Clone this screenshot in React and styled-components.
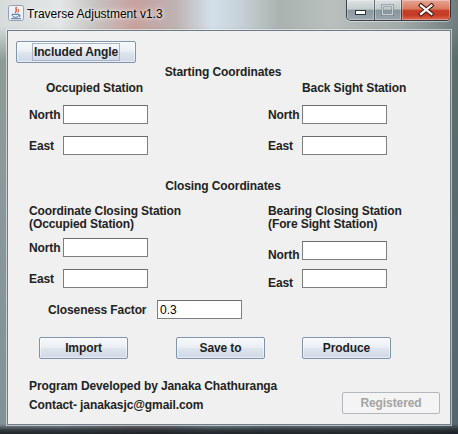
import styled, { createGlobalStyle } from "styled-components";

const Global = createGlobalStyle`
  html, body {
    margin: 0;
    padding: 0;
    background: #9aa3a6;
  }
  body {
    font-family: "Liberation Sans", Arial, sans-serif;
  }
`;

const Window = styled.div`
  width: 458px;
  height: 434px;
  display: flex;
  flex-direction: column;
  overflow: hidden;
  background:
    linear-gradient(180deg, transparent 0, transparent 424px, rgba(25, 30, 34, 0.75) 430px, rgba(20, 24, 28, 0.9) 434px),
    linear-gradient(180deg, transparent 26px, rgba(70, 92, 86, 0.5) 60px, rgba(60, 84, 96, 0.55) 100%),
    linear-gradient(90deg, #d6dbdc 0px, #e3e6e7 60px, #c7c3c1 95px, #c8a19f 135px, #bdb2b1 175px, #d3e0ea 212px, #c7d1d6 240px, #aab3b0 280px, #b9c0be 330px, #a2abaa 400px, #6f7c7d 458px);
`;

const TitleBar = styled.div`
  height: 30px;
  flex: none;
  display: flex;
  align-items: flex-start;
  padding-left: 8px;
`;

const TitleIcon = styled.svg`
  margin-top: 5px;
  flex: none;
`;

const TitleText = styled.div`
  margin: 6px 0 0 3px;
  font-size: 12px;
  line-height: 16px;
  color: #000;
  text-shadow: 0 0 6px rgba(255, 255, 255, 0.95), 0 0 3px rgba(255, 255, 255, 0.9);
`;

const Caption = styled.div`
  margin-left: auto;
  margin-right: 7px;
  height: 20px;
  display: flex;
  border: 1px solid rgba(28, 36, 44, 0.8);
  border-top: none;
  border-radius: 0 0 5px 5px;
  overflow: hidden;
  box-shadow: 0 1px 0 rgba(255, 255, 255, 0.45);
`;

const CaptionButton = styled.div`
  width: ${({ $w }) => $w}px;
  height: 20px;
  display: flex;
  align-items: center;
  justify-content: center;
  border-left: ${({ $first }) => ($first ? "none" : "1px solid rgba(28, 36, 44, 0.6)")};
  box-shadow: inset 0 0 0 1px rgba(255, 255, 255, 0.3);
  background: ${({ $close }) =>
    $close
      ? "linear-gradient(180deg, #e6a595 0%, #d9785f 45%, #c8402a 52%, #c33a25 75%, #e0694f 100%)"
      : "linear-gradient(180deg, rgba(255,255,255,0.6) 0%, rgba(214,222,229,0.55) 45%, rgba(118,133,146,0.6) 52%, rgba(146,160,170,0.65) 100%)"};
`;

const Frame = styled.div`
  flex: 1;
  display: flex;
  padding: 0 7px 9px 7px;
`;

const Panel = styled.div`
  flex: 1;
  display: flex;
  flex-direction: column;
  background: #f0f0f0;
  border: 1px solid #6f7b87;
  box-shadow: 0 0 0 1px rgba(255, 255, 255, 0.55);
  letter-spacing: -0.1px;
`;

const TopRow = styled.div`
  display: flex;
  margin-top: 10px;
  padding-left: 8px;
`;

const Button = styled.button`
  width: ${({ $w }) => $w}px;
  height: 22px;
  margin-left: ${({ $gap }) => $gap || 0}px;
  padding: 0;
  display: flex;
  align-items: center;
  justify-content: center;
  font-family: "Liberation Sans", Arial, sans-serif;
  font-size: 12px;
  font-weight: 700;
  letter-spacing: -0.1px;
  color: #1d1f24;
  border: 1px solid #8193aa;
  border-radius: 2px;
  background: linear-gradient(180deg, #f7f9fb 0%, #ebeff5 45%, #dde4ed 55%, #cfd8e4 100%);
  box-shadow: inset 0 0 0 1px rgba(255, 255, 255, 0.5);

  &:disabled {
    color: #a4a4a4;
    border-color: #b3b7ba;
    background: #f4f4f4;
    box-shadow: none;
  }
`;

const FocusRing = styled.span`
  display: inline-block;
  padding: 0 1px;
  line-height: 16px;
  border: 1px solid #a7b5c8;
`;

const SectionTitle = styled.div`
  margin-top: ${({ $top }) => $top}px;
  padding-right: 12px;
  text-align: center;
  font-size: 12px;
  font-weight: 700;
  line-height: 14px;
  color: #222;
`;

const Columns = styled.div`
  display: grid;
  grid-template-columns: 239px 1fr;
  margin-top: ${({ $top }) => $top}px;
  padding-left: 21px;
`;

const Column = styled.div`
  display: flex;
  flex-direction: column;
`;

const Heading = styled.div`
  padding-left: ${({ $indent }) => $indent || 0}px;
  font-size: 12px;
  font-weight: 700;
  line-height: ${({ $lh }) => $lh || 14}px;
  color: #222;
`;

const FieldRow = styled.div`
  display: flex;
  align-items: center;
  height: 19px;
  margin-top: ${({ $top }) => $top}px;
  padding-left: ${({ $indent }) => $indent || 0}px;
`;

const Label = styled.span`
  width: ${({ $w }) => $w || 34}px;
  flex: none;
  margin-top: ${({ $drop }) => ($drop || 0) * 2}px;
  font-size: 12px;
  font-weight: 700;
  line-height: 14px;
  color: #222;
`;

const TextField = styled.input`
  box-sizing: border-box;
  width: 85px;
  height: 19px;
  flex: none;
  margin: 0;
  padding: 0 2px;
  border: 1px solid #7c7e80;
  border-top-color: #6a6c6e;
  background: #fff;
  font-family: "Liberation Sans", Arial, sans-serif;
  font-size: 12px;
  color: #000;
  outline: none;
`;

const ButtonRow = styled.div`
  display: flex;
  margin-top: 18px;
  padding-left: 31px;
`;

const Footer = styled.div`
  display: flex;
  align-items: flex-start;
  margin-top: 20px;
  padding-left: 21px;
`;

const Credits = styled.div`
  display: flex;
  flex-direction: column;
  gap: 5px;
  font-size: 12px;
  font-weight: 700;
  line-height: 14px;
  color: #222;
`;

const FooterButton = styled(Button)`
  margin: 13px 10px 0 auto;
`;

function JavaIcon() {
  return (
    <TitleIcon width="16" height="16" viewBox="0 0 16 16">
      <rect x="0.5" y="0.5" width="15" height="15" rx="2" fill="#eef2f6" stroke="#93a1ae" />
      <path d="M8.5 2 C6.5 3.8 10 5 7.3 8" stroke="#e0452b" strokeWidth="1.3" fill="none" />
      <path d="M10.6 4 C9.4 5.2 11.2 6 9.8 7.6" stroke="#e0452b" strokeWidth="1" fill="none" />
      <path d="M4 9.3 h7 c0 2 -1.5 3 -3.5 3 s-3.5 -1 -3.5 -3 z" fill="none" stroke="#4a6fa5" strokeWidth="1" />
      <path d="M11 9.8 c1.6 0 1.6 2 0 2" fill="none" stroke="#4a6fa5" strokeWidth="1" />
      <path d="M3 13.7 h10" stroke="#4a6fa5" strokeWidth="1" />
    </TitleIcon>
  );
}

function WindowControls() {
  return (
    <Caption>
      <CaptionButton $w={27} $first>
        <svg width="27" height="20" viewBox="0 0 27 20">
          <rect x="8.5" y="10.5" width="10" height="4" fill="#fff" stroke="#2a3540" />
        </svg>
      </CaptionButton>
      <CaptionButton $w={26}>
        <svg width="26" height="20" viewBox="0 0 26 20">
          <rect x="7.5" y="5.5" width="10" height="9" fill="none" stroke="rgba(90,104,116,0.55)" strokeWidth="3" />
          <rect x="7.5" y="5.5" width="10" height="9" fill="none" stroke="rgba(235,240,244,0.7)" strokeWidth="1.5" />
        </svg>
      </CaptionButton>
      <CaptionButton $w={48} $close>
        <svg width="48" height="20" viewBox="0 0 48 20">
          <path d="M19 5.5 L29.5 14 M29.5 5.5 L19 14" stroke="#4a1d16" strokeWidth="4.2" strokeLinecap="square" />
          <path d="M19 5.5 L29.5 14 M29.5 5.5 L19 14" stroke="#fff" strokeWidth="2.2" strokeLinecap="square" />
        </svg>
      </CaptionButton>
    </Caption>
  );
}

function Field({ label, top, drop, indent, value }) {
  return (
    <FieldRow $top={top} $indent={indent}>
      <Label $drop={drop}>{label}</Label>
      <TextField type="text" defaultValue={value || ""} />
    </FieldRow>
  );
}

export default function App() {
  return (
    <>
      <Global />
      <Window>
        <TitleBar>
          <JavaIcon />
          <TitleText>Traverse Adjustment v1.3</TitleText>
          <WindowControls />
        </TitleBar>

        <Frame>
          <Panel>
            <TopRow>
              <Button $w={120}>
                <FocusRing>Included Angle</FocusRing>
              </Button>
            </TopRow>

            <SectionTitle $top={2}>Starting Coordinates</SectionTitle>
            <Columns $top={2}>
              <Column>
                <Heading $indent={17}>Occupied Station</Heading>
                <Field label="North" top={10} />
                <Field label="East" top={12} />
              </Column>
              <Column>
                <Heading $indent={34}>Back Sight Station</Heading>
                <Field label="North" top={10} />
                <Field label="East" top={12} />
              </Column>
            </Columns>

            <SectionTitle $top={24}>Closing Coordinates</SectionTitle>
            <Columns $top={12}>
              <Column>
                <Heading $lh={13}>
                  Coordinate Closing Station
                  <br />
                  (Occupied Station)
                </Heading>
                <Field label="North" top={7} />
                <Field label="East" top={12} />
              </Column>
              <Column>
                <Heading $lh={13}>
                  Bearing Closing Station
                  <br />
                  (Fore Sight Station)
                </Heading>
                <Field label="North" top={10} drop={4} />
                <Field label="East" top={9} drop={4} />
              </Column>
            </Columns>

            <FieldRow $top={12} $indent={40}>
              <Label $w={109}>Closeness Factor</Label>
              <TextField type="text" defaultValue="0.3" />
            </FieldRow>

            <ButtonRow>
              <Button $w={89}>Import</Button>
              <Button $w={89} $gap={48}>Save to</Button>
              <Button $w={89} $gap={37}>Produce</Button>
            </ButtonRow>

            <Footer>
              <Credits>
                <span>Program Developed by Janaka Chathuranga</span>
                <span>Contact- janakasjc@gmail.com</span>
              </Credits>
              <FooterButton $w={98} disabled>
                Registered
              </FooterButton>
            </Footer>
          </Panel>
        </Frame>
      </Window>
    </>
  );
}
